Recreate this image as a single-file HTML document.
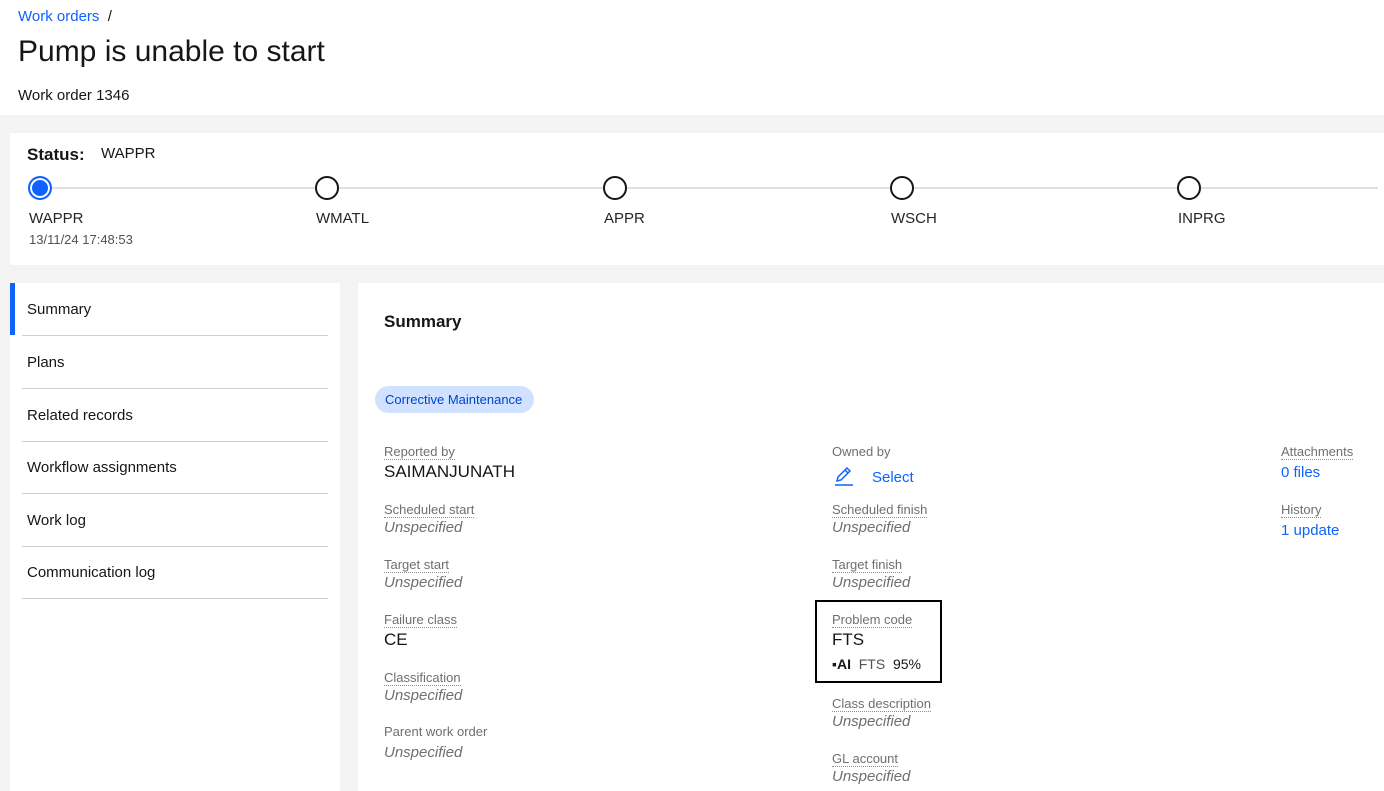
<!DOCTYPE html>
<html><head><style>
*{margin:0;padding:0;box-sizing:border-box}
body{width:1384px;height:791px;overflow:hidden;background:#f3f3f3;font-family:"Liberation Sans",sans-serif;color:#161616;position:relative}
.a{position:absolute;white-space:nowrap}
.lbl{font-size:13px;color:#6f6f6f;border-bottom:1px dotted #8d8d8d;line-height:15px}
.val{font-size:15px;font-style:italic;color:#6f6f6f}
.nav{position:absolute;left:22px;width:306px;height:53px;border-bottom:1px solid #d0d0d0;font-size:15px;padding-left:5px;line-height:53px}
.c{position:absolute;width:24px;height:24px;border:2px solid #161616;border-radius:50%;background:#fff;top:176px}
.st{position:absolute;top:210px;font-size:15px;color:#262626}
</style></head><body>
<div class="a" style="left:0;top:0;width:1384px;height:115px;background:#fff"></div>
<div class="a" style="left:18px;top:8px;font-size:15px;color:#0f62fe">Work orders <span style="color:#161616">&nbsp;/</span></div>
<div class="a" style="left:18px;top:35px;font-size:30px">Pump is unable to start</div>
<div class="a" style="left:18px;top:87px;font-size:15px">Work order 1346</div>

<div class="a" style="left:10px;top:133px;width:1374px;height:132px;background:#fff"></div>
<div class="a" style="left:27px;top:145px;font-size:17px;font-weight:bold">Status:</div>
<div class="a" style="left:101px;top:145px;font-size:15px">WAPPR</div>
<div class="a" style="left:40px;top:187px;width:1338px;height:2px;background:#e0e0e0"></div>
<div class="c" style="left:28px;background:#0f62fe;border-color:#0f62fe;box-shadow:inset 0 0 0 2px #fff"></div>
<div class="c" style="left:315px"></div>
<div class="c" style="left:603px"></div>
<div class="c" style="left:890px"></div>
<div class="c" style="left:1177px"></div>
<div class="st" style="left:29px">WAPPR</div>
<div class="a" style="left:29px;top:232px;font-size:13px;color:#525252">13/11/24 17:48:53</div>
<div class="st" style="left:316px">WMATL</div>
<div class="st" style="left:604px">APPR</div>
<div class="st" style="left:891px">WSCH</div>
<div class="st" style="left:1178px">INPRG</div>

<div class="a" style="left:10px;top:283px;width:330px;height:508px;background:#fff"></div>
<div class="a" style="left:10px;top:283px;width:5px;height:52px;background:#0f62fe"></div>
<div class="nav" style="top:283px">Summary</div>
<div class="nav" style="top:336px">Plans</div>
<div class="nav" style="top:389px">Related records</div>
<div class="nav" style="top:441px">Workflow assignments</div>
<div class="nav" style="top:494px">Work log</div>
<div class="nav" style="top:546px">Communication log</div>

<div class="a" style="left:358px;top:283px;width:1026px;height:508px;background:#fff"></div>
<div class="a" style="left:384px;top:312px;font-size:17px;font-weight:bold">Summary</div>
<div class="a" style="left:375px;top:386px;height:27px;padding:0 12px 0 10px;line-height:27px;border-radius:14px;background:#d0e2ff;color:#0043ce;font-size:13px">Corrective Maintenance</div>

<div class="a lbl" style="left:384px;top:444px">Reported by</div>
<div class="a" style="left:384px;top:462px;font-size:17px">SAIMANJUNATH</div>
<div class="a lbl" style="left:384px;top:502px">Scheduled start</div>
<div class="a val" style="left:384px;top:519px">Unspecified</div>
<div class="a lbl" style="left:384px;top:557px">Target start</div>
<div class="a val" style="left:384px;top:574px">Unspecified</div>
<div class="a lbl" style="left:384px;top:612px">Failure class</div>
<div class="a" style="left:384px;top:630px;font-size:17px">CE</div>
<div class="a lbl" style="left:384px;top:670px">Classification</div>
<div class="a val" style="left:384px;top:687px">Unspecified</div>
<div class="a" style="left:384px;top:724px;font-size:13px;color:#6f6f6f">Parent work order</div>
<div class="a val" style="left:384px;top:744px">Unspecified</div>

<div class="a" style="left:832px;top:444px;font-size:13px;color:#6f6f6f">Owned by</div>
<svg class="a" style="left:834px;top:466px" width="20" height="20" viewBox="0 0 20 20" fill="none" stroke="#0f62fe" stroke-width="1.5"><path d="M3 15l1-4 9-9 3 3-9 9z M11 4l3 3"/><path d="M1 19h18"/></svg>
<div class="a" style="left:872px;top:469px;font-size:15px;color:#0f62fe">Select</div>
<div class="a lbl" style="left:832px;top:502px">Scheduled finish</div>
<div class="a val" style="left:832px;top:519px">Unspecified</div>
<div class="a lbl" style="left:832px;top:557px">Target finish</div>
<div class="a val" style="left:832px;top:574px">Unspecified</div>
<div class="a" style="left:815px;top:600px;width:127px;height:83px;border:2px solid #000"></div>
<div class="a lbl" style="left:832px;top:612px">Problem code</div>
<div class="a" style="left:832px;top:630px;font-size:17px">FTS</div>
<div class="a" style="left:832px;top:656px;font-size:14px"><b>▪AI</b>&nbsp; <span style="color:#525252">FTS</span>&nbsp; 95%</div>
<div class="a lbl" style="left:832px;top:696px">Class description</div>
<div class="a val" style="left:832px;top:713px">Unspecified</div>
<div class="a lbl" style="left:832px;top:751px">GL account</div>
<div class="a val" style="left:832px;top:768px">Unspecified</div>

<div class="a lbl" style="left:1281px;top:444px">Attachments</div>
<div class="a" style="left:1281px;top:464px;font-size:15px;color:#0f62fe">0 files</div>
<div class="a lbl" style="left:1281px;top:502px">History</div>
<div class="a" style="left:1281px;top:522px;font-size:15px;color:#0f62fe">1 update</div>
</body></html>
